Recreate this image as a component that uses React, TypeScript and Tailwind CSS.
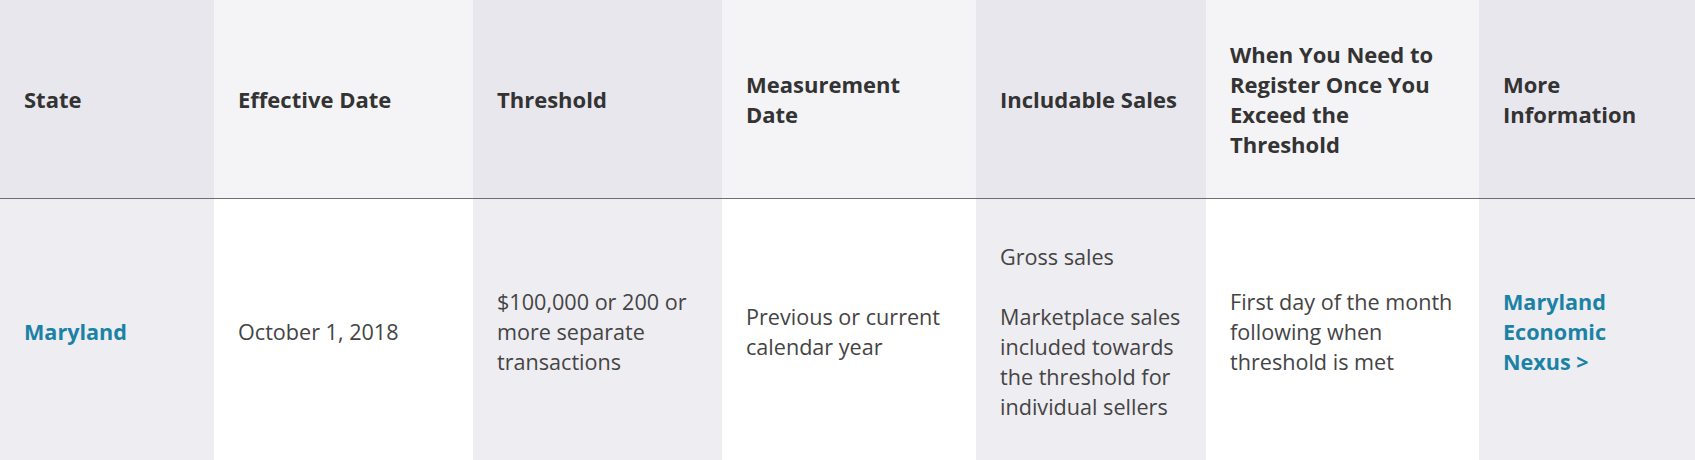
// Tabela de nexus econômico por estado

const headers = [
  "State",
  "Effective Date",
  "Threshold",
  "Measurement Date",
  "Includable Sales",
  "When You Need to Register Once You Exceed the Threshold",
  "More Information",
];

// larguras medidas no print
const widths = ["w-[214px]", "w-[259px]", "w-[249px]", "w-[254px]", "w-[230px]", "w-[273px]", "w-[216px]"];

const headCell = "px-6 py-[39px] align-middle text-left font-bold text-[22px] leading-[30px] text-[#333]";
const bodyCell = "pl-6 pr-3 py-[43px] align-middle text-left text-[21.6px] leading-[30px] text-[#444]";

function App() {
  return (
    <div className="w-[1695px] h-[460px] overflow-hidden bg-white font-['Open_Sans',sans-serif]">
      <table className="w-[1695px] table-fixed border-collapse">
        <colgroup>
          {widths.map((w, i) => (
            <col key={i} className={w} />
          ))}
        </colgroup>
        <thead>
          <tr className="border-b border-[#6f6f6f]">
            {headers.map((h, i) => (
              <th key={h} className={`${headCell} ${i % 2 === 0 ? "bg-[#e9e7ee]" : "bg-[#f4f3f6]"}`}>
                {h}
              </th>
            ))}
          </tr>
        </thead>
        <tbody>
          <tr>
            <td className={`${bodyCell} bg-[#eeedf2]`}>
              <a href="#" className="font-bold text-[#1b82a5]">Maryland</a>
            </td>
            <td className={`${bodyCell} bg-white`}>October 1, 2018</td>
            <td className={`${bodyCell} bg-[#eeedf2]`}>$100,000 or 200 or more separate transactions</td>
            <td className={`${bodyCell} bg-white`}>Previous or current calendar year</td>
            <td className={`${bodyCell} bg-[#eeedf2]`}>
              <p>Gross sales</p>
              <p className="mt-[30px]">Marketplace sales included towards the threshold for individual sellers</p>
            </td>
            <td className={`${bodyCell} bg-white`}>First day of the month following when threshold is met</td>
            <td className={`${bodyCell} !pr-6 bg-[#eeedf2]`}>
              <a href="#" className="font-bold text-[#1b82a5]">Maryland Economic Nexus &gt;</a>
            </td>
          </tr>
        </tbody>
      </table>
    </div>
  );
}

export default App;
